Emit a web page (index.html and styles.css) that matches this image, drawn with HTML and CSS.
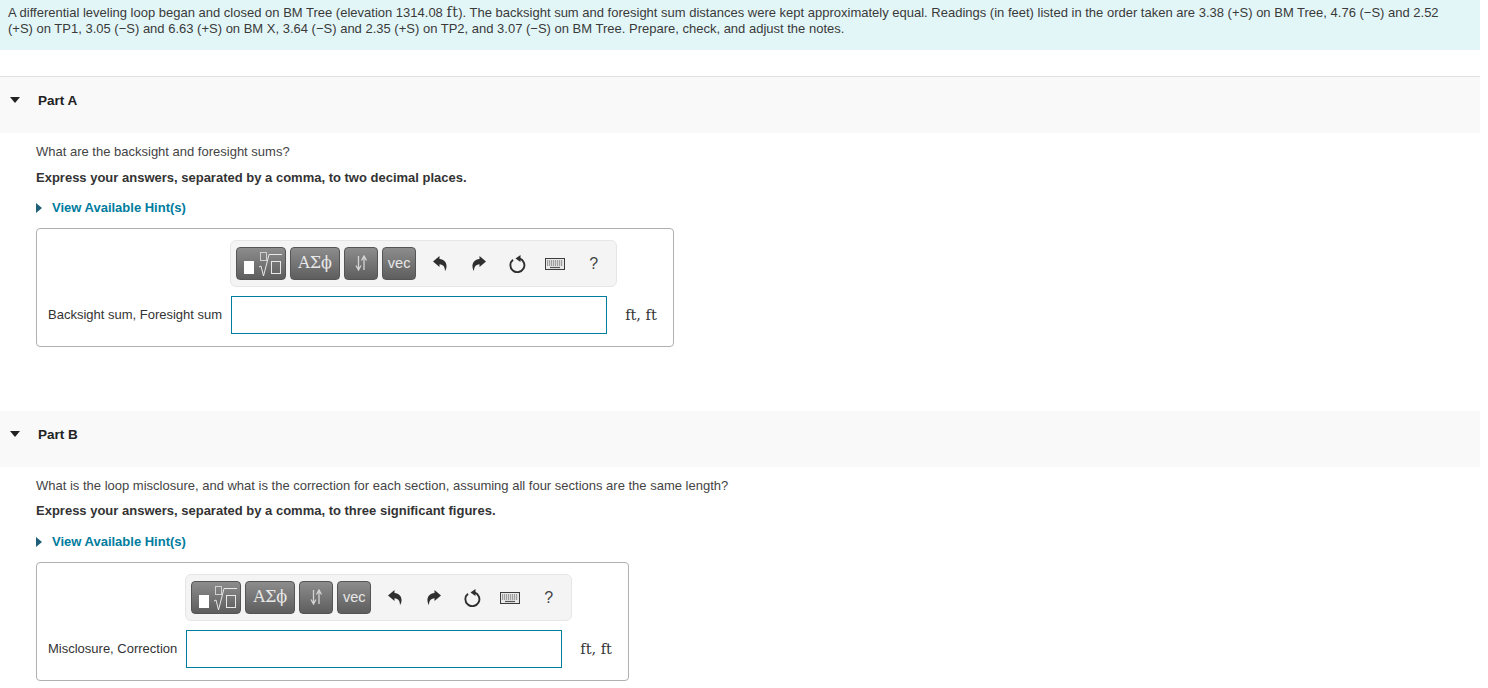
FILE: index.html
```html
<!DOCTYPE html>
<html lang="en">
<head>
<meta charset="utf-8">
<title>Differential leveling loop</title>
<link rel="stylesheet" href="styles.css">
</head>
<body>
<svg class="defs" width="0" height="0" aria-hidden="true">
  <defs>
    <symbol id="i-templates" viewBox="0 0 48 31">
      <rect x="7" y="13" width="10" height="13" fill="#fff"/>
      <rect x="23.500" y="4.500" width="6" height="8" fill="none" stroke="#d0d0d0"/>
      <path d="M22 19 L24 18 L26.500 28 L32 6.500 H45" fill="none" stroke="#e8e8e8" stroke-width="1"/>
      <rect x="34.500" y="13.500" width="9" height="12" fill="none" stroke="#e8e8e8"/>
    </symbol>
    <symbol id="i-arrows" viewBox="0 0 14 16">
      <path d="M4.500 1 V14 M2 10.500 L4.500 15 L7 10.500" fill="none" stroke="#d4d4d4" stroke-width="1.300"/>
      <path d="M10 15 V2 M7.500 5.500 L10 1 L12.500 5.500" fill="none" stroke="#d4d4d4" stroke-width="1.300"/>
    </symbol>
    <symbol id="i-undo" viewBox="0 0 14 15">
      <path d="M0 5.500 L6.500 0 V3 C11 3.200 14 6.500 13.500 11 C13.300 12.800 12.800 14 12 15 C12 11.500 10.500 8.500 6.500 8.300 V11 Z" fill="#2f2f2f"/>
    </symbol>
    <symbol id="i-refresh" viewBox="0 0 17 18">
      <path d="M10.500 3.500 A7 7 0 1 1 4 4.700" fill="none" stroke="#2f2f2f" stroke-width="1.900"/>
      <path d="M6.500 3.500 L11.500 0 V7 Z" fill="#2f2f2f"/>
    </symbol>
    <symbol id="i-keyboard" viewBox="0 0 20 12">
      <rect x=".5" y=".5" width="19" height="11" fill="#e8e8e8" stroke="#3c3c3c"/>
      <path d="M2 3 H18 M2 5 H18 M2 7 H18" stroke="#555" stroke-width="1.200" stroke-dasharray="1.200 .8"/>
      <path d="M5 9.500 H15" stroke="#555" stroke-width="1.200"/>
    </symbol>
  </defs>
</svg>
<main class="page">
  <div class="intro">A differential leveling loop began and closed on BM Tree (elevation 1314.08 <span class="unit-inline">ft</span>). The backsight sum and foresight sum distances were kept approximately equal. Readings (in feet) listed in the order taken are 3.38 (+S) on BM Tree, 4.76 (−S) and 2.52 (+S) on TP1, 3.05 (−S) and 6.63 (+S) on BM X, 3.64 (−S) and 2.35 (+S) on TP2, and 3.07 (−S) on BM Tree. Prepare, check, and adjust the notes.</div>

  <section class="part part-a">
    <header class="part-head"><span class="caret"></span><h2>Part A</h2></header>
    <div class="part-body">
      <p class="question">What are the backsight and foresight sums?</p>
      <p class="instr">Express your answers, separated by a comma, to two decimal places.</p>
      <p class="hint"><span class="hint-caret"></span>View Available Hint(s)</p>
      <div class="answer">
        <div class="toolbar">
          <span class="btn btn-t"><svg width="48" height="31"><use href="#i-templates"/></svg></span>
          <span class="btn btn-g">ΑΣϕ</span>
          <span class="btn btn-a"><svg width="14" height="16"><use href="#i-arrows"/></svg></span>
          <span class="btn btn-v">vec</span>
          <span class="tools">
            <svg width="14" height="15"><use href="#i-undo"/></svg>
            <svg width="14" height="15"><use href="#i-undo"/></svg>
            <svg width="17" height="18"><use href="#i-refresh"/></svg>
            <svg width="20" height="12"><use href="#i-keyboard"/></svg>
            <span class="help">?</span>
          </span>
        </div>
        <label class="lbl">Backsight sum, Foresight sum</label>
        <span class="field"></span>
        <span class="unit">ft, ft</span>
      </div>
    </div>
  </section>

  <section class="part part-b">
    <header class="part-head"><span class="caret"></span><h2>Part B</h2></header>
    <div class="part-body">
      <p class="question">What is the loop misclosure, and what is the correction for each section, assuming all four sections are the same length?</p>
      <p class="instr">Express your answers, separated by a comma, to three significant figures.</p>
      <p class="hint"><span class="hint-caret"></span>View Available Hint(s)</p>
      <div class="answer">
        <div class="toolbar">
          <span class="btn btn-t"><svg width="48" height="31"><use href="#i-templates"/></svg></span>
          <span class="btn btn-g">ΑΣϕ</span>
          <span class="btn btn-a"><svg width="14" height="16"><use href="#i-arrows"/></svg></span>
          <span class="btn btn-v">vec</span>
          <span class="tools">
            <svg width="14" height="15"><use href="#i-undo"/></svg>
            <svg width="14" height="15"><use href="#i-undo"/></svg>
            <svg width="17" height="18"><use href="#i-refresh"/></svg>
            <svg width="20" height="12"><use href="#i-keyboard"/></svg>
            <span class="help">?</span>
          </span>
        </div>
        <label class="lbl">Misclosure, Correction</label>
        <span class="field"></span>
        <span class="unit">ft, ft</span>
      </div>
    </div>
  </section>
</main>
</body>
</html>
```
FILE: styles.css
```css
* { box-sizing: border-box; }
html, body { margin: 0; padding: 0; background: #fff; }
body { font: 13px/16px "Liberation Sans", Arial, sans-serif; color: #333; overflow: hidden; }
.defs { display: block; height: 0; }
.page { width: 1480px; }
.intro { background: #e3f6f7; height: 50px; padding: 5px 30px 0 8px; line-height: 16px; color: #3a3a3a; }
.unit-inline { font-family: "DejaVu Serif", "Liberation Serif", serif; font-size: 14px; line-height: 1; letter-spacing: .5px; }
.part-a { margin-top: 26px; border-top: 1px solid #e0e0e0; }
.part-b { margin-top: 64px; }
.part-head { height: 56px; background: #f9f9f9; display: flex; align-items: flex-start; padding: 15px 0 0 10px; }
.caret { width: 0; height: 0; border-style: solid; border-width: 6px 5.500px 0; border-color: #222 transparent transparent; margin: 5px 18px 0 0; }
h2 { margin: 1px 0 0; font-size: 13.500px; line-height: 16px; font-weight: bold; color: #222; }
.part-body { padding: 11px 0 0 36px; }
p { margin: 0; }
.question { color: #444; }
.instr { margin-top: 10px; font-weight: bold; color: #333; }
.part-b .instr { margin-top: 9px; }
.hint { margin-top: 14px; color: #007c9e; font-weight: bold; display: flex; align-items: center; }
.part-b .hint { margin-top: 15px; }
.hint-caret { width: 0; height: 0; border-style: solid; border-width: 5px 0 5px 6px; border-color: transparent transparent transparent #1f5f7a; margin-right: 10px; }
.answer { margin-top: 12px; width: fit-content; border: 1px solid #b0b0b0; border-radius: 4px; padding: 11px 16px 12px 11px; display: grid; grid-template-columns: auto 376px auto; column-gap: 9px; row-gap: 9px; align-items: center; }
.toolbar { grid-column: 2 / 4; grid-row: 1; justify-self: start; margin-left: -1px; width: 387px; height: 47px; background: #f4f4f4; border: 1px solid #e6e6e6; border-radius: 6px; display: flex; align-items: center; padding-left: 5px; gap: 4px; }
.btn { height: 33px; border-radius: 4px; background: linear-gradient(#8c8c8c, #5e5e5e); border: 1px solid #555; display: flex; align-items: center; justify-content: center; color: #e8e8e8; padding-bottom: 2px; }
.btn svg { display: block; }
.btn-t { width: 50px; padding-bottom: 0; }
.btn-g { width: 50px; font: 16px "DejaVu Serif", "Liberation Serif", serif; }
.btn-a { width: 34px; padding-bottom: 1px; }
.btn-v { width: 34px; font-size: 14.500px; }
.tools { display: flex; align-items: center; margin-left: 13px; }
.tools svg:nth-child(1) { margin-right: 25px; }
.tools svg:nth-child(2) { margin-right: 23px; transform: scaleX(-1); }
.tools svg:nth-child(3) { margin-right: 19px; }
.tools svg:nth-child(4) { margin-right: 24px; }
.help { font-size: 16px; color: #444; }
.lbl { grid-column: 1; grid-row: 2; color: #333; }
.field { grid-column: 2; grid-row: 2; height: 38px; border: 1px solid #007c9e; background: #fff; }
.unit { grid-column: 3; grid-row: 2; margin-left: 9px; font: 14.500px "DejaVu Serif", "Liberation Serif", serif; color: #333; }
```
